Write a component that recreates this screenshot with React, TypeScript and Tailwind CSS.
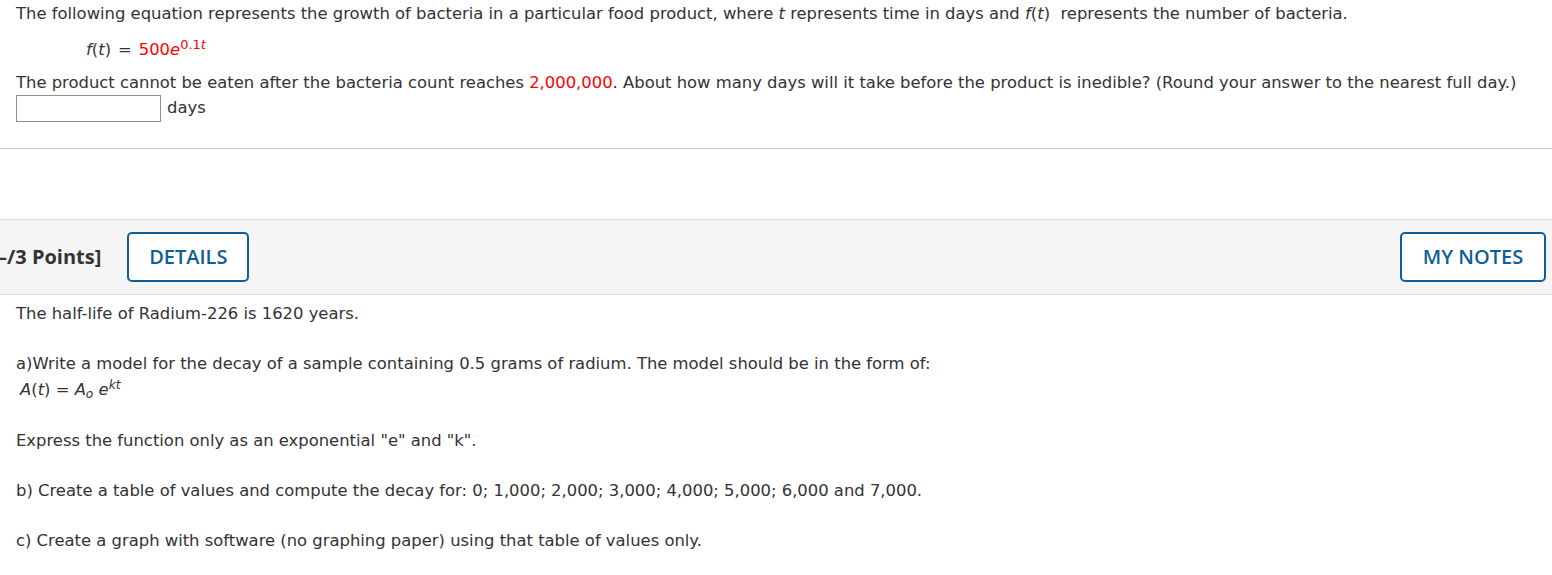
import React from "react";

const body = "font-['DejaVu_Sans',sans-serif] text-[16.4px] text-[#333]";

function QuestionTop() {
  return (
    <div className={`${body} px-4 pt-[4px]`}>
      <p className="leading-5">
        The following equation represents the growth of bacteria in a particular food product, where <i>t</i> represents time in days and{" "}
        <i>f</i>(<i>t</i>)&nbsp; represents the number of bacteria.
      </p>
      <div className="mt-[16px] pl-[70px] leading-5">
        <i>f</i>(<i>t</i>)<span className="mx-[7px]">=</span>
        <span className="text-[#ff0000]">500<i>e</i><sup className="text-[13px]">0.1<i>t</i></sup></span>
      </div>
      <p className="mt-[13px] leading-5">
        The product cannot be eaten after the bacteria count reaches <span className="text-[#ff0000]">2,000,000</span>. About how many days will it take before the product is inedible? (Round your answer to the nearest full day.)
      </p>
      <div className="mt-[2px] flex items-center gap-[6px]">
        <input className="h-[27px] w-[145px] border border-[#8f8f8f] bg-white" />
        <span>days</span>
      </div>
    </div>
  );
}

function HeaderBand() {
  return (
    <div className="flex items-center justify-between border-y border-[#dcdcdc] bg-[#f5f5f5] py-[12px] pr-[6px] font-['Open_Sans',sans-serif]">
      <div className="flex items-center gap-[26px]">
        <span className="-ml-[3px] text-[20px] font-bold text-[#333]">–/3 Points]</span>
        <button className="h-[50px] w-[122px] rounded-[5px] border-2 border-[#0e5f95] bg-white text-[20px] font-semibold text-[#0e5f95]">
          DETAILS
        </button>
      </div>
      <button className="h-[50px] w-[146px] rounded-[5px] border-2 border-[#0e5f95] bg-white text-[20px] font-semibold text-[#0e5f95]">
        MY NOTES
      </button>
    </div>
  );
}

function QuestionBottom() {
  return (
    <div className={`${body} px-4 pt-[9px] leading-5`}>
      <p>The half-life of Radium-226 is 1620 years.</p>
      <p className="mt-[30px]">
        a)Write a model for the decay of a sample containing 0.5 grams of radium. The model should be in the form of:
      </p>
      <div className="mt-[6px] pl-[4px]">
        <i>A</i>(<i>t</i>) = <i>A</i><sub><i>o</i></sub> <i>e</i><sup><i>kt</i></sup>
      </div>
      <p className="mt-[31px]">Express the function only as an exponential "e" and "k".</p>
      <p className="mt-[30px]">b) Create a table of values and compute the decay for: 0; 1,000; 2,000; 3,000; 4,000; 5,000; 6,000 and 7,000.</p>
      <p className="mt-[30px]">c) Create a graph with software (no graphing paper) using that table of values only.</p>
    </div>
  );
}

export default function App() {
  return (
    <div className="h-[575px] w-[1552px] overflow-hidden bg-white">
      <QuestionTop />
      <div className="mt-[26px] border-t border-[#c8c8c8]" />
      <div className="h-[70px]" />
      <HeaderBand />
      <QuestionBottom />
    </div>
  );
}
